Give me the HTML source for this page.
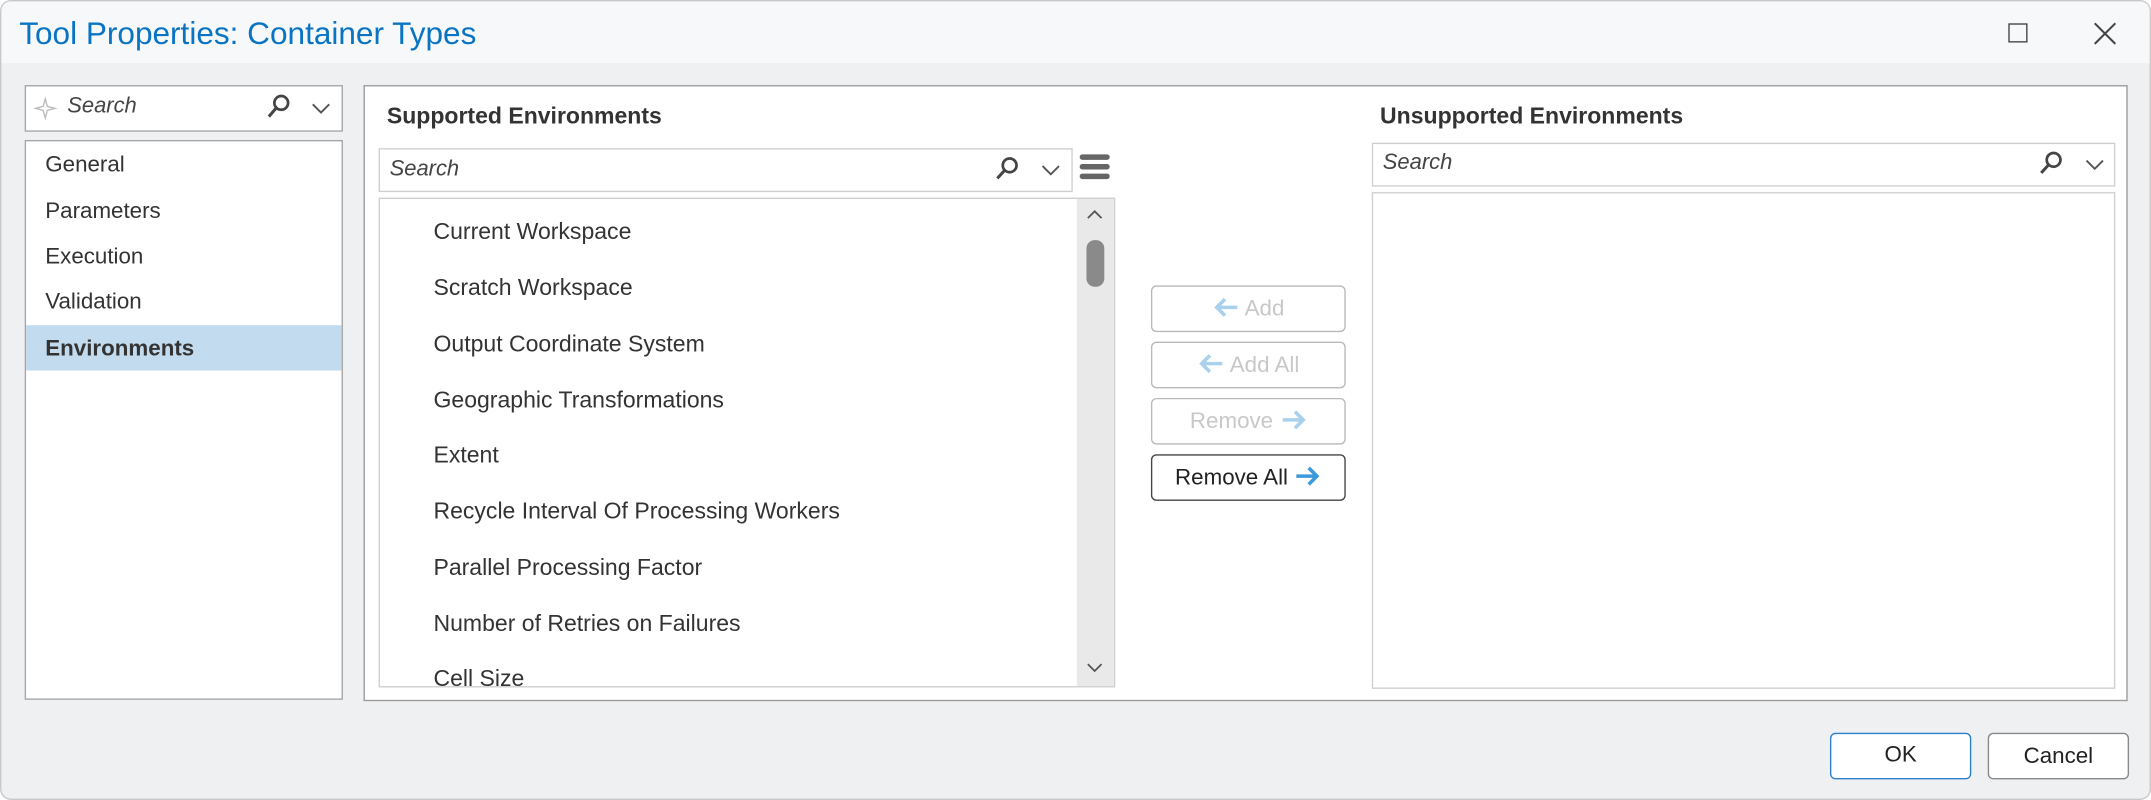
<!DOCTYPE html>
<html><head><style>
html,body{margin:0;padding:0;width:2151px;height:800px;overflow:hidden;background:#fff}
#s{position:absolute;left:0;top:0;width:1568px;height:583px;transform:scale(1.3718,1.3722);transform-origin:0 0;font-family:"Liberation Sans",sans-serif;color:#333}
.a{position:absolute;box-sizing:border-box}
.win{left:0;top:0;width:1568px;height:583px;background:#eff0f2;border:1px solid #c8c8c8;border-radius:8px;overflow:hidden}
.tb{left:0;top:0;width:1568px;height:45px;background:#f6f8f9}
.box{background:#fff;border:1px solid #a5a5a5}
.sb{background:#fff;border:1px solid #cfcfcf}
.it{position:absolute;left:39px;font-size:16.8px;color:#333;white-space:nowrap}
.lt{position:absolute;left:14px;font-size:16.3px;color:#333}
.btn{position:absolute;left:838px;width:142px;height:34px;border:1px solid #b9b9b9;border-radius:4px;background:#fff;text-align:center;line-height:32px;font-size:16.3px;color:#c8c8c8;box-sizing:border-box}
.btn svg{vertical-align:-2px}
.srch{position:absolute;font-style:italic;font-size:16px;color:#444}
</style></head><body><div id="s">
<div class="a win">
<div class="a tb"></div>
<div class="a" style="left:13px;top:10px;font-size:23px;color:#0a74c4">Tool Properties: Container Types</div>
<div class="a" style="left:1463px;top:16px;width:14px;height:14px;border:1.5px solid #444"></div>
<svg class="a" style="left:1525px;top:15px" width="17" height="17"><path d="M1 1L16 16M16 1L1 16" stroke="#444" stroke-width="1.5"/></svg>

<div class="a box" style="left:17px;top:61px;width:232px;height:34px"></div>
<svg class="a" style="left:22px;top:68px" width="20" height="20"><path d="M10 3L11.5 8.5L17 10L11.5 11.5L10 17L8.5 11.5L3 10L8.5 8.5Z" fill="none" stroke="#bbb" stroke-width="1"/></svg>
<div class="srch" style="left:48px;top:68px">Search</div>
<svg class="a" style="left:192px;top:67px" width="20" height="20"><circle cx="12" cy="7" r="5" fill="none" stroke="#444" stroke-width="2"/><path d="M8.5 10.5L3 17" stroke="#444" stroke-width="2.2"/></svg>
<svg class="a" style="left:226px;top:73px" width="14" height="10"><path d="M1 2L7 8L13 2" fill="none" stroke="#555" stroke-width="1.4"/></svg>

<div class="a box" style="left:17px;top:101px;width:232px;height:408px">
<div class="lt" style="top:8px">General</div>
<div class="lt" style="top:42px">Parameters</div>
<div class="lt" style="top:75px">Execution</div>
<div class="lt" style="top:108px">Validation</div>
<div class="a" style="left:0;top:134px;width:230px;height:33px;background:#c2dbee"></div>
<div class="lt" style="top:142px;font-weight:bold">Environments</div>
</div>

<div class="a box" style="left:264px;top:61px;width:1286px;height:449px;border-color:#9a9a9a"></div>
<div class="a" style="left:281px;top:74px;font-weight:bold;font-size:16.8px;color:#333">Supported Environments</div>
<div class="a sb" style="left:275px;top:107px;width:506px;height:32px"></div>
<div class="srch" style="left:283px;top:114px">Search</div>
<svg class="a" style="left:723px;top:112px" width="20" height="20"><circle cx="12" cy="7.5" r="5" fill="none" stroke="#444" stroke-width="2"/><path d="M8.5 11L3 17" stroke="#444" stroke-width="2.2"/></svg>
<svg class="a" style="left:758px;top:118px" width="14" height="10"><path d="M1 2L7 8L13 2" fill="none" stroke="#555" stroke-width="1.4"/></svg>
<svg class="a" style="left:786px;top:111px" width="22" height="20"><path d="M2 2.5H20M2 9.5H20M2 16.5H20" stroke="#666" stroke-width="4" stroke-linecap="round"/></svg>

<div class="a sb" style="left:275px;top:143px;width:537px;height:357px;overflow:hidden">
<div class="it" style="top:14px">Current Workspace</div>
<div class="it" style="top:55px">Scratch Workspace</div>
<div class="it" style="top:96px">Output Coordinate System</div>
<div class="it" style="top:137px">Geographic Transformations</div>
<div class="it" style="top:177px">Extent</div>
<div class="it" style="top:218px">Recycle Interval Of Processing Workers</div>
<div class="it" style="top:259px">Parallel Processing Factor</div>
<div class="it" style="top:300px">Number of Retries on Failures</div>
<div class="it" style="top:340px">Cell Size</div>
<div class="a" style="left:508px;top:0;width:27px;height:355px;background:#e9e9e9"></div>
<svg class="a" style="left:515px;top:8px" width="12" height="8"><path d="M1 6L6 1L11 6" fill="none" stroke="#555" stroke-width="1.3"/></svg>
<div class="a" style="left:515px;top:30px;width:13px;height:34px;background:#8a8a8a;border-radius:6px"></div>
<svg class="a" style="left:515px;top:338px" width="12" height="8"><path d="M1 1L6 6L11 1" fill="none" stroke="#555" stroke-width="1.3"/></svg>
</div>

<div class="btn" style="top:207px"><svg width="20" height="16"><path d="M18 8H3M9 2L3 8L9 14" fill="none" stroke="#a9d1ee" stroke-width="2.6"/></svg> Add</div>
<div class="btn" style="top:248px"><svg width="20" height="16"><path d="M18 8H3M9 2L3 8L9 14" fill="none" stroke="#a9d1ee" stroke-width="2.6"/></svg> Add All</div>
<div class="btn" style="top:289px">Remove <svg width="20" height="16"><path d="M2 8H17M11 2L17 8L11 14" fill="none" stroke="#a9d1ee" stroke-width="2.6"/></svg></div>
<div class="btn" style="top:330px;border-color:#444;color:#222">Remove All <svg width="20" height="16"><path d="M2 8H17M11 2L17 8L11 14" fill="none" stroke="#3d9ad8" stroke-width="2.6"/></svg></div>

<div class="a" style="left:1005px;top:74px;font-weight:bold;font-size:16.8px;color:#333">Unsupported Environments</div>
<div class="a sb" style="left:999px;top:103px;width:542px;height:32px"></div>
<div class="srch" style="left:1007px;top:109px">Search</div>
<svg class="a" style="left:1484px;top:108px" width="20" height="20"><circle cx="12" cy="7.5" r="5" fill="none" stroke="#444" stroke-width="2"/><path d="M8.5 11L3 17" stroke="#444" stroke-width="2.2"/></svg>
<svg class="a" style="left:1519px;top:114px" width="14" height="10"><path d="M1 2L7 8L13 2" fill="none" stroke="#555" stroke-width="1.4"/></svg>
<div class="a sb" style="left:999px;top:139px;width:542px;height:362px"></div>

<div class="a" style="left:1333px;top:533px;width:103px;height:34px;border:1.5px solid #2d7fc9;border-radius:4px;background:#fff;text-align:center;line-height:31px;font-size:16.3px;color:#222">OK</div>
<div class="a" style="left:1448px;top:533px;width:103px;height:34px;border:1px solid #888;border-radius:4px;background:#fff;text-align:center;line-height:32px;font-size:16.3px;color:#222">Cancel</div>
</div>
</div></body></html>
